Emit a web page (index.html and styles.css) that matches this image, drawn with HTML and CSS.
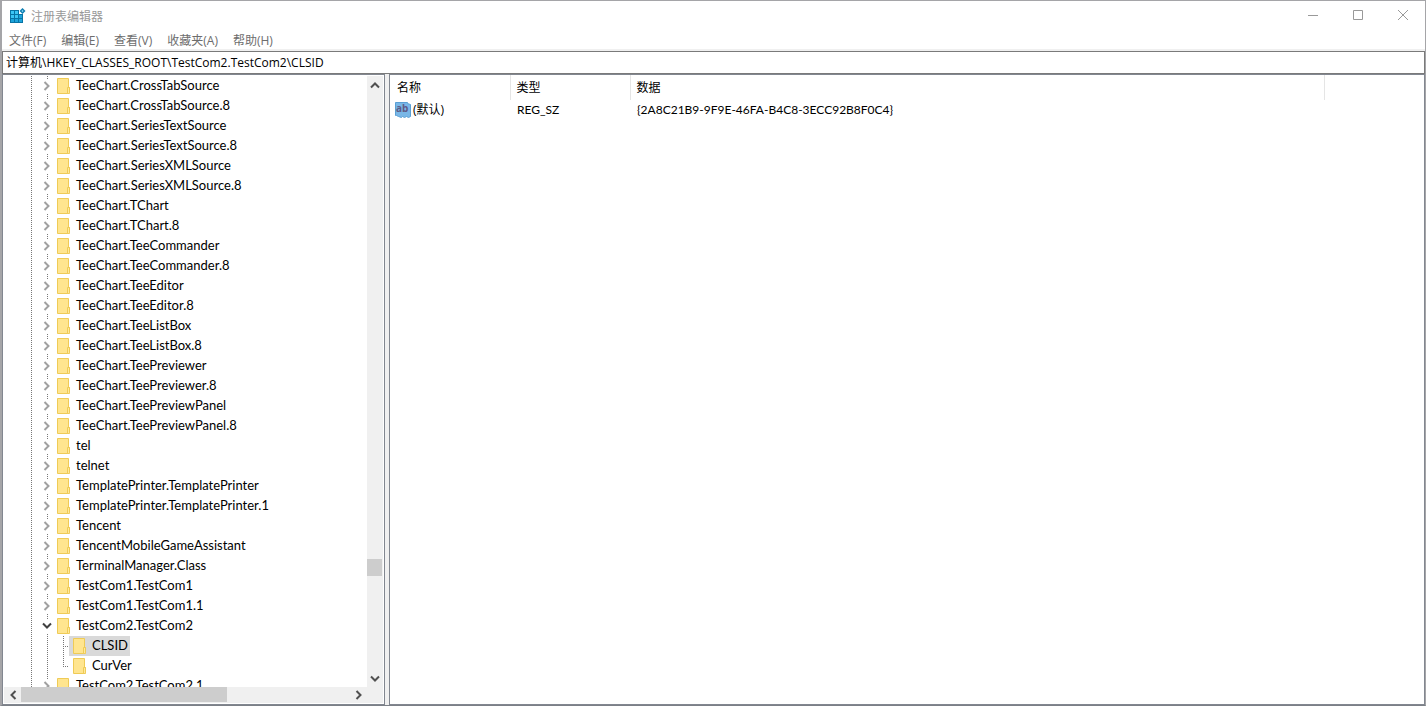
FILE: index.html
```html
<!DOCTYPE html>
<html lang="zh-CN">
<head>
  <meta charset="UTF-8">
  <title>注册表编辑器</title>
  <meta name="viewport" content="width=device-width, initial-scale=1.0">
  <link rel="stylesheet" href="styles.css">
</head>
<body>
  <svg class="defs" aria-hidden="true">
    <symbol id="folder" viewBox="0 0 14 16">
      <path d="M.5.5h11v9h1v6h-12z" fill="#ffe58f" stroke="#efcb56"/>
      <path d="M10.500 9.500h2v5l-1 1h-1z" fill="#ffe99c" stroke="#efcb56"/>
    </symbol>
    <symbol id="chevron" viewBox="0 0 10 10">
      <path d="M2.500 1 6.500 5 2.500 9" fill="none" stroke="currentColor" stroke-width="2"/>
    </symbol>
  </svg>

  <div class="window">
    <header class="titlebar">
      <svg class="app-icon" viewBox="0 0 16 16">
        <path d="M0 2h9v4h4v9H0z" fill="#0874a5"/>
        <path d="M1 3h3v3H1zM5 3h3v3H5zM1 7h3v3H1zM5 7h3v3H5z" fill="#3cc6f5"/>
        <path d="M9 7h3v3H9zM1 11h3v3H1zM5 11h3v3H5zM9 11h3v3H9z" fill="#1da4db"/>
        <path d="M12.500 0 15.500 3l-3 3-3-3z" fill="#0f7fb2"/>
        <path d="M12.500 2l1 1-1 1-1-1z" fill="#8fe0ff"/>
      </svg>
      <h1>注册表编辑器</h1>
      <div class="window-buttons">
        <button aria-label="最小化"><svg viewBox="0 0 10 10"><path d="M0 5.500h10"/></svg></button>
        <button aria-label="最大化"><svg viewBox="0 0 10 10"><path d="M.5.5h9v9h-9z"/></svg></button>
        <button aria-label="关闭"><svg viewBox="0 0 10 10"><path d="M0 0l10 10M10 0L0 10"/></svg></button>
      </div>
    </header>

    <nav class="menubar">
      <button>文件(F)</button>
      <button>编辑(E)</button>
      <button>查看(V)</button>
      <button>收藏夹(A)</button>
      <button>帮助(H)</button>
    </nav>

    <input class="address" type="text" aria-label="地址" value="计算机\HKEY_CLASSES_ROOT\TestCom2.TestCom2\CLSID">

    <main class="panes">
      <section class="tree-pane">
        <ul class="tree" id="tree"></ul>
        <div class="vscroll">
          <button aria-label="向上滚动"><svg class="up"><use href="#chevron"/></svg></button>
          <div class="track"><div class="thumb"></div></div>
          <button aria-label="向下滚动"><svg class="down"><use href="#chevron"/></svg></button>
        </div>
        <div class="hscroll">
          <button aria-label="向左滚动"><svg class="left"><use href="#chevron"/></svg></button>
          <div class="track"><div class="thumb"></div></div>
          <button aria-label="向右滚动"><svg><use href="#chevron"/></svg></button>
        </div>
      </section>

      <section class="value-pane">
        <table>
          <thead>
            <tr><th class="col-name">名称</th><th class="col-type">类型</th><th class="col-data">数据</th><th></th></tr>
          </thead>
          <tbody>
            <tr>
              <td class="name">
                <svg class="value-icon" viewBox="0 0 16 16">
                  <path d="M.5.5h12v1l3 1v12l-2 1-2-1-2 1-2-1-1 1-3-1-2-1h-1z" fill="#79b7e7" stroke="#5a9fd4"/>
                  <text x="1" y="10">ab</text>
                </svg><span>(默认)</span>
              </td>
              <td>REG_SZ</td>
              <td>{2A8C21B9-9F9E-46FA-B4C8-3ECC92B8F0C4}</td>
              <td></td>
            </tr>
          </tbody>
        </table>
      </section>
    </main>
  </div>

  <script>
    const keys = [
      'TeeChart.CrossTabSource', 'TeeChart.CrossTabSource.8',
      'TeeChart.SeriesTextSource', 'TeeChart.SeriesTextSource.8',
      'TeeChart.SeriesXMLSource', 'TeeChart.SeriesXMLSource.8',
      'TeeChart.TChart', 'TeeChart.TChart.8',
      'TeeChart.TeeCommander', 'TeeChart.TeeCommander.8',
      'TeeChart.TeeEditor', 'TeeChart.TeeEditor.8',
      'TeeChart.TeeListBox', 'TeeChart.TeeListBox.8',
      'TeeChart.TeePreviewer', 'TeeChart.TeePreviewer.8',
      'TeeChart.TeePreviewPanel', 'TeeChart.TeePreviewPanel.8',
      'tel', 'telnet',
      'TemplatePrinter.TemplatePrinter', 'TemplatePrinter.TemplatePrinter.1',
      'Tencent', 'TencentMobileGameAssistant', 'TerminalManager.Class',
      'TestCom1.TestCom1', 'TestCom1.TestCom1.1',
      { name: 'TestCom2.TestCom2', children: ['CLSID', 'CurVer'] },
      'TestCom2.TestCom2.1'
    ];
    const selected = 'CLSID';
    const folder = '<svg class="folder"><use href="#folder"/></svg>';

    document.getElementById('tree').innerHTML = keys.map(key => {
      const name = key.name || key;
      const open = key.children ? ' open' : '';
      const row = `<div class="row"><button class="toggle${open}" aria-label="${name}"><svg><use href="#chevron"/></svg></button>${folder}<span class="key">${name}</span></div>`;
      const children = (key.children || []).map(child =>
        `<li class="child${child === selected ? ' selected' : ''}"><i class="branch"></i><span class="label">${folder}<span class="key">${child}</span></span></li>`
      ).join('');
      return `<li>${row}${children ? `<ul>${children}</ul>` : ''}</li>`;
    }).join('');
  </script>
</body>
</html>
```
FILE: styles.css
```css
* {
  box-sizing: border-box;
}
body {
  margin: 0;
  font-family: 'Open Sans', 'Noto Sans CJK SC', sans-serif;
  font-size: 12px;
  color: #000;
  background: #fff;
}
ul {
  list-style: none;
  margin: 0;
  padding: 0;
}
button {
  font: inherit;
  color: inherit;
  background: none;
  border: none;
  padding: 0;
}
.defs {
  display: block;
  width: 0;
  height: 0;
}
.window {
  display: flex;
  flex-direction: column;
  height: 100vh;
  border: 1px solid #a5a5a8;
  border-left-width: 2px;
  border-bottom-color: #7c8087;
}
.titlebar {
  display: flex;
  align-items: center;
  height: 29px;
  padding-left: 8px;
  color: #999;
}
.app-icon {
  width: 16px;
  height: 16px;
}
h1 {
  margin: 0 0 0 5px;
  font-size: 12px;
  font-weight: normal;
}
.window-buttons {
  display: flex;
  margin-left: auto;
}
.window-buttons button {
  width: 45px;
  height: 29px;
}
.window-buttons svg {
  width: 10px;
  height: 10px;
  fill: none;
  stroke: #999;
}
.menubar {
  display: flex;
  height: 21px;
  padding-left: 7px;
  gap: 15px;
  color: #6d6d6d;
  border-bottom: 2px solid #f0f0f0;
}
.address {
  height: 23px;
  padding: 0 3px 2px;
  font: inherit;
  color: inherit;
  border: 1px solid #7a7a7a;
  outline: none;
}
.panes {
  flex: 1;
  min-height: 0;
  display: grid;
  grid-template-columns: 383px 1fr;
  gap: 4px;
  background: #f0f0f0;
}
.tree-pane {
  display: grid;
  grid-template-columns: 1fr 16px;
  grid-template-rows: 1fr 16px;
  min-height: 0;
  padding: 1px;
  background: #fff;
  border: 1px solid #828790;
}
.tree {
  overflow: hidden;
  min-height: 0;
  padding-left: 27px;
  font-family: Lato, 'Noto Sans CJK SC', sans-serif;
  font-size: 13px;
  background: repeating-linear-gradient(#777 0 1px, #fff 1px 2px) 27px 0 / 1px 100% no-repeat;
}
.tree > li {
  background: repeating-linear-gradient(#777 0 1px, #fff 1px 2px) 16px 0 / 1px 100% no-repeat;
}
.row {
  display: flex;
  align-items: center;
  height: 20px;
  padding-left: 10px;
}
.key {
  line-height: 18px;
  padding-bottom: 2px;
}
.toggle {
  width: 12px;
  height: 14px;
  color: #a0a0a0;
  background: #fff;
}
.toggle svg {
  display: block;
  width: 10px;
  height: 10px;
  margin: auto;
}
.toggle.open {
  color: #404040;
}
.toggle.open svg {
  transform: rotate(90deg);
}
.folder {
  flex: none;
  width: 14px;
  height: 16px;
  margin: 0 5px 0 4px;
}
.child {
  display: flex;
  height: 20px;
  padding-left: 32px;
}
.branch {
  width: 6px;
  background:
    repeating-linear-gradient(#777 0 1px, #fff 1px 2px) 0 0 / 1px 100% no-repeat,
    repeating-linear-gradient(90deg, #777 0 1px, #fff 1px 2px) 0 10px / 100% 1px no-repeat;
}
.child:last-child .branch {
  background-size: 1px 10px, 100% 1px;
}
.label {
  display: flex;
  align-items: center;
  padding-right: 2px;
}
.selected .label {
  background: #d9d9d9;
}
.vscroll {
  display: flex;
  flex-direction: column;
  background: #f0f0f0;
}
.hscroll {
  display: flex;
  grid-column: 1 / -1;
  padding-right: 16px;
  background: #f0f0f0;
}
.vscroll button,
.hscroll button {
  display: flex;
  align-items: center;
  justify-content: center;
  flex: none;
  width: 17px;
  height: 16px;
  color: #505050;
}
.vscroll button {
  width: 15px;
  height: 17px;
}
.vscroll svg,
.hscroll svg {
  width: 10px;
  height: 10px;
}
.up {
  transform: rotate(-90deg);
}
.down {
  transform: rotate(90deg);
}
.left {
  transform: rotate(180deg);
}
.track {
  flex: 1;
}
.thumb {
  background: #cdcdcd;
}
.vscroll .thumb {
  width: 15px;
  height: 17px;
  margin-top: 466px;
}
.hscroll .thumb {
  width: 206px;
  height: 15px;
}
.value-pane {
  background: #fff;
  border: 1px solid #828790;
}
table {
  width: 100%;
  border-collapse: collapse;
  table-layout: fixed;
}
th {
  height: 25px;
  padding: 0 6px 2px;
  font-weight: normal;
  text-align: left;
  border-right: 1px solid #e5e5e5;
}
th:first-child {
  padding-left: 7px;
}
th:last-child {
  border-right: none;
}
td {
  height: 20px;
  padding: 0 7px;
  font-family: Lato, 'Noto Sans CJK SC', sans-serif;
  line-height: 20px;
}
.col-name,
.col-type {
  width: 120px;
}
.col-data {
  width: 694px;
}
.name {
  display: flex;
  align-items: center;
  gap: 2px;
  padding: 0 5px;
  font-family: inherit;
}
.value-icon {
  width: 16px;
  height: 16px;
}
.value-icon text {
  font: bold 10px 'Open Sans', sans-serif;
  fill: #5f5a86;
}
```
